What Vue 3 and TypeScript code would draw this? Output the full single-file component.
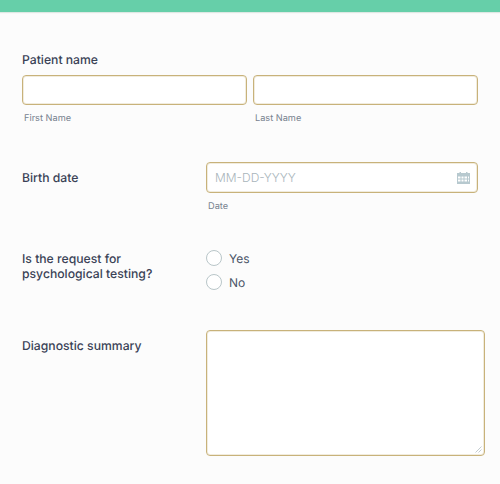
<script setup lang="ts">
const options: string[] = ['Yes', 'No']
</script>

<template>
  <div class="page">
    <div class="topbar"></div>
    <form class="form" @submit.prevent>
      <section class="name-field">
        <div class="label">Patient name</div>
        <div class="name-row">
          <div class="name-col">
            <input class="box name-input" type="text" />
            <div class="sub">First Name</div>
          </div>
          <div class="name-col">
            <input class="box name-input" type="text" />
            <div class="sub">Last Name</div>
          </div>
        </div>
      </section>

      <section class="row birth">
        <div class="label side">Birth date</div>
        <div class="control date-control">
          <div class="date-wrap">
            <input class="box date-input" type="text" placeholder="MM-DD-YYYY" />
            <svg class="cal" width="13" height="12" viewBox="0 0 13 12" aria-hidden="true">
              <path fill="#b7c9cf" fill-rule="evenodd" d="M0 1h2.500V0h1.500v1h5V0h1.500v1H13v11H0V1zM1 4.500v2h2.500v-2H1zm3.500 0v2h2v-2h-2zm3 0v2H10v-2H7.500zm3.500 0v2h1v-2h-1zM1 7.500v2h2.500v-2H1zm3.500 0v2h2v-2h-2zm3 0v2H10v-2H7.500zm3.500 0v2h1v-2h-1z" />
            </svg>
          </div>
          <div class="sub date-sub">Date</div>
        </div>
      </section>

      <section class="row testing">
        <div class="label side">Is the request for<br />psychological testing?</div>
        <div class="radios">
          <label v-for="o in options" :key="o" class="radio">
            <span class="circle"></span>
            <span>{{ o }}</span>
          </label>
        </div>
      </section>

      <section class="row summary">
        <div class="label side">Diagnostic summary</div>
        <div class="area-wrap">
          <textarea class="box area"></textarea>
          <svg class="grip" width="7" height="7" viewBox="0 0 7 7" aria-hidden="true">
            <path d="M0.500 6.500L6.500 0.500M3.500 6.500L6.500 3.500" stroke="#c3ccd0" stroke-width="1" fill="none" />
          </svg>
        </div>
      </section>
    </form>
  </div>
</template>

<style scoped>
.page {
  width: 500px;
  height: 484px;
  overflow: hidden;
  background: #fcfcfc;
  font-family: Inter, "Liberation Sans", sans-serif;
  color: #3a4256;
  text-rendering: geometricPrecision;
}
.topbar {
  height: 12px;
  background: #66cfa9;
  box-shadow: 0 1px 1px #dfe8e4;
}
.form {
  padding: 40px 22px 0;
}
.label {
  font-size: 12.2px;
  font-weight: 500;
  line-height: 16px;
}
.box {
  display: block;
  box-sizing: border-box;
  width: 100%;
  border: 1px solid #c8b27a;
  border-radius: 4px;
  background: #fff;
  box-shadow: inset 0 0 0 1px rgba(200, 178, 122, 0.25);
  outline: none;
  margin: 0;
  font-family: inherit;
}
.name-row {
  display: flex;
  gap: 6px;
  margin-top: 7px;
}
.name-col {
  width: 225px;
}
.name-input {
  height: 30px;
}
.sub {
  font-size: 9.2px;
  font-weight: 400;
  line-height: 12px;
  color: #77828f;
  margin-top: 8px;
  padding-left: 2px;
}
.row {
  display: flex;
}
.side {
  width: 184px;
  flex: none;
}
.birth {
  margin-top: 37px;
}
.birth .side {
  padding-top: 8px;
}
.date-control {
  width: 272px;
}
.date-wrap {
  position: relative;
}
.date-input {
  height: 31px;
  padding: 0 8px;
  font-size: 12px;
  font-weight: 300;
}
.date-input::placeholder {
  color: #a9b5bb;
  opacity: 1;
}
.cal {
  position: absolute;
  right: 8px;
  top: 10px;
}
.date-sub {
  margin-top: 8px;
}
.testing {
  margin-top: 37px;
}
.testing .side {
  padding-top: 1px;
  line-height: 15px;
}
.radios {
  display: flex;
  flex-direction: column;
  gap: 8px;
}
.radio {
  display: flex;
  align-items: center;
  gap: 7px;
  height: 16px;
  font-size: 12px;
  color: #4a5568;
}
.circle {
  box-sizing: border-box;
  width: 16px;
  height: 16px;
  border: 1px solid #b9c6c9;
  border-radius: 50%;
  background: #fff;
}
.summary {
  margin-top: 40px;
}
.summary .side {
  padding-top: 8px;
}
.area-wrap {
  position: relative;
  flex: none;
  width: 279px;
  height: 126px;
}
.area {
  height: 100%;
  resize: none;
}
.grip {
  position: absolute;
  right: 3px;
  bottom: 3px;
}
</style>
